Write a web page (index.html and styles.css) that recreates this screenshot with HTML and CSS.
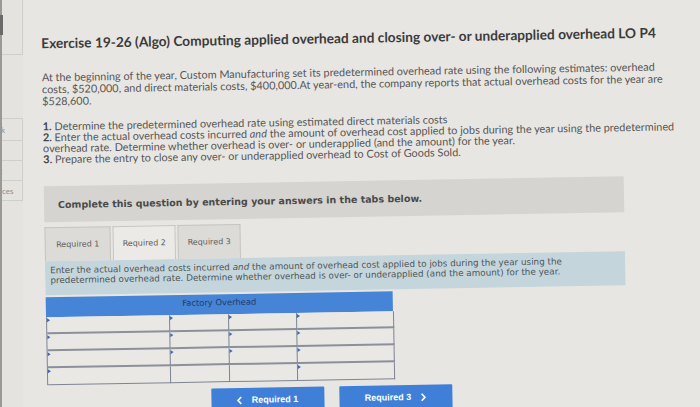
FILE: index.html
```html
<!DOCTYPE html>
<html lang="en">
<head>
<meta charset="utf-8">
<title>Exercise 19-26</title>
<link rel="stylesheet" href="styles.css">
</head>
<body>
<div class="page">
  <aside class="sidebar">
    <div class="sb-top"><span class="handle"></span></div>
    <ul class="sb-list">
      <li class="sb-item sb-first"><span class="sb-label">eBook</span></li>
      <li class="sb-item"><span class="sb-label">Hint</span></li>
      <li class="sb-item"><span class="sb-label">Print</span></li>
      <li class="sb-item"><span class="sb-label">References</span></li>
    </ul>
  </aside>
  <main class="main">
    <h1 class="title">Exercise 19-26 (Algo) Computing applied overhead and closing over- or underapplied overhead LO P4</h1>
    <p class="intro">At the beginning of the year, Custom Manufacturing set its predetermined overhead rate using the following estimates: overhead costs, $520,000, and direct materials costs, $400,000.At year-end, the company reports that actual overhead costs for the year are $528,600.</p>
    <ol class="steps">
      <li><b>1.</b> Determine the predetermined overhead rate using estimated direct materials costs</li>
      <li><b>2.</b> Enter the actual overhead costs incurred <i>and</i> the amount of overhead cost applied to jobs during the year using the predetermined overhead rate. Determine whether overhead is over- or underapplied (and the amount) for the year.</li>
      <li><b>3.</b> Prepare the entry to close any over- or underapplied overhead to Cost of Goods Sold.</li>
    </ol>
    <div class="panel">
      <div class="notice">Complete this question by entering your answers in the tabs below.</div>
      <div class="tabs">
        <div class="tab tab-wide">Required 1</div>
        <div class="tab tab-active">Required 2</div>
        <div class="tab">Required 3</div>
      </div>
      <div class="instr">Enter the actual overhead costs incurred <i>and</i> the amount of overhead cost applied to jobs during the year using the predetermined overhead rate. Determine whether overhead is over- or underapplied (and the amount) for the year.</div>
      <div class="taccount">
        <div class="ta-head">Factory Overhead</div>
        <div class="ta-grid">
          <div class="cell in"></div><div class="cell in"></div><div class="cell in"></div><div class="cell in last"></div>
          <div class="cell in"></div><div class="cell in"></div><div class="cell in"></div><div class="cell in last"></div>
          <div class="cell in"></div><div class="cell in"></div><div class="cell in"></div><div class="cell in last"></div>
          <div class="cell in bottom"></div><div class="cell bottom"></div><div class="cell bottom"></div><div class="cell in last bottom"></div>
        </div>
      </div>
      <div class="nav">
        <button class="btn" type="button"><svg class="chev" width="6" height="9" viewBox="0 0 6 9"><path d="M4.8 1 L1.5 4.5 L4.8 8" fill="none" stroke="#fff" stroke-width="1.6"/></svg><span>Required 1</span></button>
        <button class="btn" type="button"><span>Required 3</span><svg class="chev" width="6" height="9" viewBox="0 0 6 9"><path d="M1.2 1 L4.5 4.5 L1.2 8" fill="none" stroke="#fff" stroke-width="1.6"/></svg></button>
      </div>
    </div>
  </main>
</div>
</body>
</html>
```
FILE: styles.css
```css
* { box-sizing: border-box; }
html, body { margin: 0; padding: 0; }
body {
  background: #e8e6e2;
  width: 700px;
  height: 407px;
  overflow: hidden;
  font-family: Lato, "Liberation Sans", sans-serif;
}
.page {
  display: flex;
  height: 407px;
  overflow: hidden;
}

/* sidebar */
.sidebar {
  flex: none;
  width: 23px;
  border-left: 2px solid #9a9996;
  background: #e4e3e0;
}
.sb-top {
  height: 55px;
  border-right: 1px solid #d0cecb;
  border-bottom: 1px solid #d0cecb;
  padding-top: 15px;
}
.handle {
  display: block;
  width: 3px;
  height: 20px;
  margin-left: -2px;
  background: #6b6a68;
}
.sb-list {
  list-style: none;
  margin: 63px 0 0;
  padding: 0;
  border-top: 1px solid #d0cecb;
}
.sb-item {
  display: flex;
  align-items: center;
  height: 20px;
  overflow: hidden;
  border-right: 1px solid #d0cecb;
  border-bottom: 1px solid #d0cecb;
}
.sb-first { height: 22px; }
.sb-label {
  flex: none;
  width: 60px;
  margin-left: -38px;
  text-align: center;
  font-size: 8px;
  color: #8d8c89;
}

/* main */
.main {
  flex: 1;
  padding: 30px 0 0 21px;
  transform: rotate(-1deg);
  transform-origin: 327px 200px;
}
.title {
  margin: 0;
  font-size: 13.7px;
  line-height: 16px;
  font-weight: 700;
  color: #3b3b3b;
  white-space: nowrap;
}
.intro {
  margin: 20px 0 0;
  width: 634px;
  font-size: 10.9px;
  line-height: 12px;
  color: #575757;
}
.steps {
  list-style: none;
  margin: 13px 0 0;
  padding: 0;
  width: 636px;
  font-size: 10.9px;
  line-height: 11px;
  color: #575757;
}
.steps b { color: #444; }

.panel { width: 580px; }
.notice {
  margin-top: 22px;
  height: 36px;
  display: flex;
  align-items: center;
  padding-left: 14px;
  background: #d5d4d1;
  font-family: "DejaVu Sans", Verdana, sans-serif;
  font-size: 9.5px;
  font-weight: 700;
  color: #4a4a4a;
}
.tabs {
  margin-top: 5px;
  display: flex;
  gap: 2px;
  height: 34px;
}
.tab {
  width: 63px;
  display: flex;
  align-items: center;
  justify-content: center;
  background: #dcdbd8;
  border: 1px solid #c6c5c2;
  border-bottom: none;
  font-family: "DejaVu Sans", Verdana, sans-serif;
  font-size: 8px;
  color: #5d5d5d;
}
.tab-wide { width: 66px; }
.tab-active { background: #eceae6; }
.instr {
  height: 34px;
  padding: 5px 5px 0;
  background: #c5d5dc;
  font-family: "DejaVu Sans", Verdana, sans-serif;
  font-size: 8.8px;
  line-height: 9.5px;
  color: #4e5559;
}
.taccount {
  margin-top: 2px;
  width: 347px;
}
.ta-head {
  height: 20px;
  background: #4684d7;
  text-align: center;
  font-family: "DejaVu Sans", Verdana, sans-serif;
  font-size: 8.4px;
  line-height: 17px;
  color: #253a63;
}
.ta-grid {
  display: grid;
  grid-template-columns: 123px 59px 68px 97px;
  grid-auto-rows: 17px;
  border-left: 1px solid #7d8493;
  background: #e9e8e4;
}
.cell {
  position: relative;
  border-right: 1px solid #7d8493;
  border-bottom: 2px solid #8b909b;
}
.cell.bottom { border-bottom: 1px solid #7d8493; }
.cell.in::before {
  content: "";
  position: absolute;
  left: 0;
  top: 1px;
  border-left: 3px solid #3f66b3;
  border-top: 2px solid transparent;
  border-bottom: 2px solid transparent;
}

.nav {
  width: 568px;
  margin-top: 6px;
  display: flex;
  justify-content: center;
  gap: 15px;
}
.btn {
  width: 113px;
  height: 24px;
  border: none;
  border-radius: 1px;
  padding: 0;
  background: #3f7fd8;
  color: #fff;
  display: flex;
  align-items: center;
  justify-content: center;
  gap: 9px;
  font-family: "Liberation Sans", Arial, sans-serif;
  font-size: 9px;
  font-weight: 700;
}
.chev { display: block; }
```
